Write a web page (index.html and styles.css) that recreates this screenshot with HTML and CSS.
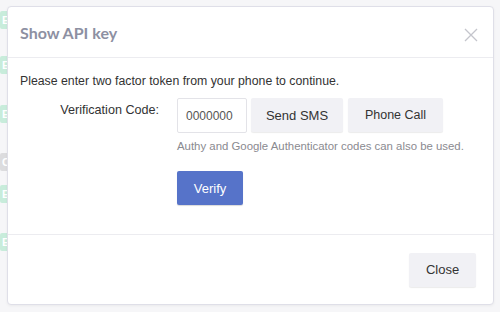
FILE: index.html
```html
<!DOCTYPE html>
<html>
<head>
<meta charset="utf-8">
<link rel="stylesheet" href="styles.css">
</head>
<body>
<div class="page">
  <div class="bg-list">
    <div class="badge green">E</div>
    <div class="badge green">E</div>
    <div class="badge green">E</div>
    <div class="badge gray">C</div>
    <div class="badge green">E</div>
    <div class="badge green">E</div>
  </div>
  <div class="modal">
    <div class="modal-header">
      <h3 class="title">Show API key</h3>
      <svg class="close-x" width="14" height="14" viewBox="0 0 14 14"><path d="M1 1L13 13M13 1L1 13" stroke="#c4c5cc" stroke-width="1.3" fill="none"/></svg>
    </div>
    <div class="modal-body">
      <p class="intro">Please enter two factor token from your phone to continue.</p>
      <div class="form-row">
        <label class="label">Verification Code:</label>
        <div class="controls">
          <div class="inputs">
            <div class="input">0000000</div>
            <button class="btn sms">Send SMS</button>
            <button class="btn call">Phone Call</button>
          </div>
          <p class="help">Authy and Google Authenticator codes can also be used.</p>
          <button class="btn-primary">Verify</button>
        </div>
      </div>
    </div>
    <div class="modal-footer">
      <button class="btn close">Close</button>
    </div>
  </div>
</div>
</body>
</html>
```
FILE: styles.css
```css
* { box-sizing: border-box; }
html, body { margin: 0; padding: 0; }
body {
  width: 500px;
  height: 312px;
  background: #f6f6f8;
  font-family: "Liberation Sans", Arial, sans-serif;
  overflow: hidden;
}
.page { position: relative; width: 500px; height: 312px; }
.bg-list {
  display: flex;
  flex-direction: column;
  padding-top: 11px;
}
.badge {
  width: 20px;
  height: 18px;
  font-size: 11px;
  font-weight: bold;
  color: #fff;
  display: flex;
  align-items: center;
  padding-left: 2px;
  border-radius: 2px;
}
.badge.green { background: #c8ecdb; }
.badge.gray { background: #dcdcde; }
.badge:nth-child(1) { margin-bottom: 27px; }
.badge:nth-child(2) { margin-bottom: 31px; }
.badge:nth-child(3) { margin-bottom: 30px; }
.badge:nth-child(4) { margin-bottom: 14px; }
.badge:nth-child(5) { margin-bottom: 30px; }
.modal {
  position: absolute;
  left: 7px;
  top: 6px;
  width: 487px;
  height: 299px;
  background: #fff;
  border: 1px solid #dfdfe8;
  border-radius: 4px;
  box-shadow: 0 1px 3px rgba(0,0,0,0.05);
  display: flex;
  flex-direction: column;
}
.modal-header {
  height: 51px;
  border-bottom: 1px solid #ececf0;
  display: flex;
  align-items: center;
  justify-content: space-between;
  padding: 0 15px 0 12px;
}
.title {
  margin: 0;
  font-family: "Lato", "Liberation Sans", sans-serif;
  font-size: 16px;
  font-weight: 700;
  color: #8d90a2;
}
.close-x { display: block; margin-top: 5px; }
.modal-body {
  flex: 1;
  padding: 14px 12px 0 12px;
}
.intro {
  margin: 0;
  font-size: 12.3px;
  line-height: 18px;
  color: #333;
}
.form-row {
  display: flex;
  margin-top: 8px;
}
.label {
  width: 139px;
  text-align: right;
  font-size: 12.6px;
  color: #333;
  padding-top: 5px;
  font-weight: normal;
}
.controls {
  margin-left: 18px;
  display: flex;
  flex-direction: column;
  align-items: flex-start;
}
.inputs { display: flex; gap: 4px; }
.input {
  width: 70px;
  height: 35px;
  border: 1px solid #e3e3e8;
  border-radius: 2px;
  font-size: 12px;
  color: #555;
  display: flex;
  align-items: center;
  padding-left: 8px;
}
.btn {
  height: 34px;
  border: none;
  border-radius: 2px;
  background: #f1f1f5;
  box-shadow: 0 1px 1px rgba(0,0,0,0.08);
  font-family: "Liberation Sans", Arial, sans-serif;
  font-size: 13px;
  color: #333;
  padding: 0;
  cursor: pointer;
}
.btn.sms { width: 92px; }
.btn.call { width: 95px; margin-left: 1px; font-size: 12.5px; }
.help {
  margin: 5px 0 0 0;
  font-size: 11.4px;
  line-height: 16px;
  color: #8a8a90;
}
.btn-primary {
  margin-top: 17px;
  width: 66px;
  height: 34px;
  border: none;
  border-radius: 2px;
  background: #5673c9;
  box-shadow: 0 1px 1px rgba(0,0,0,0.15);
  color: #fff;
  font-family: "Liberation Sans", Arial, sans-serif;
  font-size: 13px;
  padding: 0;
}
.modal-footer {
  height: 70px;
  border-top: 1px solid #ececf0;
  display: flex;
  justify-content: flex-end;
  align-items: center;
  padding-right: 17px;
}
.btn.close { width: 67px; }
```
